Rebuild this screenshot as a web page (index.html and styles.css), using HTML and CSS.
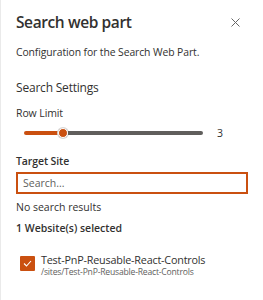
FILE: index.html
```html
<!DOCTYPE html>
<html>
<head>
<meta charset="utf-8">
<link rel="stylesheet" href="styles.css">
</head>
<body>
<div class="panel">
  <div class="header">
    <div class="title">Search web part</div>
    <svg class="close" width="9" height="9" viewBox="0 0 9 9"><path d="M0.5 0.5 L8.5 8.5 M8.5 0.5 L0.5 8.5" stroke="#666" stroke-width="1" fill="none"/></svg>
  </div>
  <div class="desc">Configuration for the Search Web Part.</div>
  <div class="group">Search Settings</div>
  <div class="label">Row Limit</div>
  <div class="slider">
    <div class="track">
      <div class="fill"></div>
      <div class="thumb"></div>
      <div class="rest"></div>
    </div>
    <div class="value">3</div>
  </div>
  <div class="label bold">Target Site</div>
  <div class="input">Search...</div>
  <div class="note">No search results</div>
  <div class="note bold">1 Website(s) selected</div>
  <div class="site">
    <div class="check"><svg width="9" height="7" viewBox="0 0 9 7"><path d="M1 3.5 L3.5 6 L8 1" stroke="#fff" stroke-width="1.1" fill="none"/></svg></div>
    <div class="site-text">
      <div class="site-name">Test-PnP-Reusable-React-Controls</div>
      <div class="site-url">/sites/Test-PnP-Reusable-React-Controls</div>
    </div>
  </div>
</div>
</body>
</html>
```
FILE: styles.css
```css
html, body { margin: 0; padding: 0; background: #fff; }
body { font-family: "Open Sans", "Noto Sans", sans-serif; color: #323130; }
.panel {
  width: 263px; height: 300px; box-sizing: border-box;
  border-left: 1px solid #eaeaea;
  padding: 0 15px 0 15px;
}
.header { display: flex; justify-content: space-between; align-items: center; height: 44px; }
.title { font-size: 15.5px; font-weight: 600; letter-spacing: -0.4px; }
.close { margin-right: 8px; }
.desc { font-size: 10.4px; margin-top: 1px; letter-spacing: -0.1px; }
.group { font-size: 12px; font-weight: 400; margin-top: 20px; letter-spacing: -0.2px; }
.label { font-size: 10.5px; margin-top: 10px; letter-spacing: -0.1px; }
.bold { font-weight: 600; }
.slider { display: flex; align-items: center; height: 26px; }
.track { display: flex; align-items: center; width: 179px; margin-left: 8px; }
.fill { width: 34px; height: 4px; background: #ca5010; border-radius: 2px 0 0 2px; }
.thumb { width: 8px; height: 8px; border-radius: 50%; background: #ca5010; border: 1px solid #fff; box-shadow: 0 0 0 1px #d6d6d6; }
.rest { flex: 1; height: 4px; background: #605e5c; border-radius: 0 2px 2px 0; }
.value { font-size: 10.5px; margin-left: 14px; }
.label.bold { margin-top: 8px; }
.input {
  margin-top: 4px; height: 22px; box-sizing: border-box; width: 232px;
  border: 2px solid #ca5010; font-size: 10.5px; color: #605e5c;
  padding-left: 5px; line-height: 18px;
}
.note { font-size: 10.5px; margin-top: 6px; }
.note.bold { margin-top: 7px; }
.site { display: flex; align-items: flex-start; margin-top: 18px; margin-left: 4px; }
.check { width: 15px; height: 15px; background: #ca5010; border-radius: 1px; display: flex; align-items: center; justify-content: center; margin-top: 3px; }
.site-text { margin-left: 6px; }
.site-name { font-size: 10.8px; line-height: 14px; letter-spacing: -0.2px; }
.site-url { font-size: 8.6px; color: #605e5c; line-height: 11px; letter-spacing: -0.2px; }
```
